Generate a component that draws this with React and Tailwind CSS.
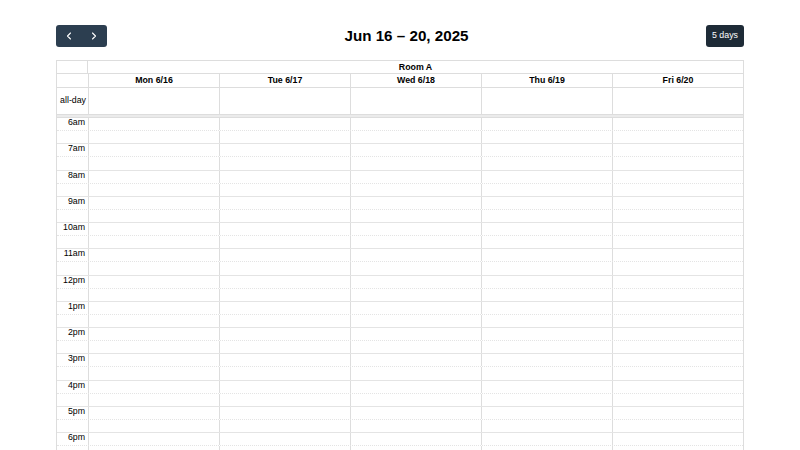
import React from "react";
import { ChevronLeft, ChevronRight } from "lucide-react";

const days = ["Mon 6/16", "Tue 6/17", "Wed 6/18", "Thu 6/19", "Fri 6/20"];
const hours = ["6am","7am","8am","9am","10am","11am","12pm","1pm","2pm","3pm","4pm","5pm","6pm"];

export default function App() {
  const slots = [];
  hours.forEach((h) => {
    slots.push({ label: h, minor: false });
    slots.push({ label: "", minor: true });
  });
  return (
    <div className="h-[450px] overflow-hidden bg-white px-[56px] pt-[25px] text-black" style={{ fontFamily: '"Liberation Sans", Arial, sans-serif' }}>
      <div className="flex h-[22px] items-center justify-between">
        <div className="flex h-[22px] overflow-hidden rounded-[3px] bg-[#2c3e50] text-white">
          <button className="flex w-[25.5px] items-center justify-center">
            <ChevronLeft size={12} strokeWidth={2.2} />
          </button>
          <button className="flex w-[25.5px] items-center justify-center">
            <ChevronRight size={12} strokeWidth={2.2} />
          </button>
        </div>
        <div className="text-[15.2px] font-bold leading-none text-black">Jun 16 – 20, 2025</div>
        <button className="flex h-[22px] w-[38px] items-center justify-center rounded-[3px] bg-[#1e2b37] text-[8.8px] text-white">
          5 days
        </button>
      </div>

      <div className="mt-[13px] border-l border-r border-t border-[#ddd]">
        <div className="grid grid-cols-[31px_1fr] border-b border-[#ddd]">
          <div className="h-[12px] border-r border-[#ddd]" />
          <div className="text-center text-[8.8px] font-bold leading-[12px]">Room A</div>
        </div>
        <div className="grid grid-cols-[31px_repeat(5,1fr)] border-b border-[#ddd]">
          <div className="h-[13px]" />
          {days.map((d) => (
            <div key={d} className="border-l border-[#ddd] text-center text-[8.8px] font-bold leading-[13px]">{d}</div>
          ))}
        </div>
        <div className="grid grid-cols-[31px_repeat(5,1fr)] border-b border-[#ddd]">
          <div className="flex h-[26px] items-center justify-end whitespace-nowrap pb-[2px] pr-[2px] text-[8.8px] leading-none text-black">all-day</div>
          {days.map((d) => (
            <div key={d} className="border-l border-[#ddd]" />
          ))}
        </div>
        <div className="h-[3px] border-b border-[#ddd] bg-[#ebebeb]" />
        {slots.map((s, i) => (
          <div
            key={i}
            className={
              "grid h-[13.125px] grid-cols-[31px_repeat(5,1fr)] border-b border-[#e4e4e4] " +
              (s.minor ? "border-solid" : "border-dotted")
            }
          >
            <div className="whitespace-nowrap pr-[3px] text-right text-[8.8px] leading-[9px] text-black">{s.label}</div>
            {days.map((d) => (
              <div key={d} className="border-l border-solid border-[#ddd]" />
            ))}
          </div>
        ))}
      </div>
    </div>
  );
}
